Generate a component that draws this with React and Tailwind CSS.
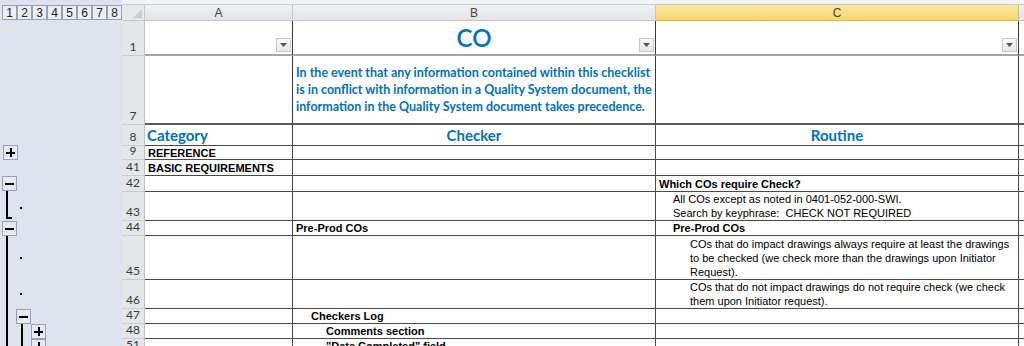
import React from 'react';

const ARIAL = "font-['Liberation_Sans',Arial,sans-serif]";
const CAL = "font-['Lato','Noto_Sans',sans-serif]";

// filter dropdown button for header cells in row 1
const Filter = () => (
    <div className="absolute right-[1px] bottom-[2px] w-[15px] h-[14px] border border-[#c5c7cb] bg-gradient-to-b from-[#fbfbfb] to-[#e6e7ea] flex items-center justify-center">
        <svg width="7" height="4" viewBox="0 0 7 4"><path d="M0 0h7L3.5 4z" fill="#555" /></svg>
    </div>
);

// outline group button (+ / -)
const Toggle = ({ plus, className = '' }) => (
    <div className={`absolute z-20 w-[15px] h-[15px] border border-[#9aa0b4] bg-[#e8eaf2] flex items-center justify-center ${className}`}>
        <div className="relative w-[9px] h-[9px]">
            <div className="absolute left-0 right-0 top-[4px] h-[2px] bg-black" />
            {plus && <div className="absolute top-0 bottom-0 left-[4px] w-[2px] bg-black" />}
        </div>
    </div>
);

// outline bracket line / dot
const Bar = ({ className }) => <div className={`absolute z-10 bg-black ${className}`} />;

const Row = ({ h, num, outline, a, b, c, line = 'border-b border-[#4a4a4a]' }) => (
    <div className="flex" style={{ height: h }}>
        <div className="relative w-[122px] shrink-0 bg-[#dfe3ee]">{outline}</div>
        <div className={`w-[23px] shrink-0 bg-[#e4e6ea] border-r border-[#bfc2c7] border-b border-b-[#c8cbd0] flex justify-center items-end text-[12px] leading-[14px] text-[#3a3a3a] pb-[1px] ${CAL}`}>
            {num}
        </div>
        <div className={`relative w-[148px] shrink-0 border-r border-[#3a3a3a] ${line}`}>{a}</div>
        <div className={`relative w-[363px] shrink-0 border-r border-[#3a3a3a] ${line}`}>{b}</div>
        <div className={`relative w-[363px] shrink-0 border-r border-[#3a3a3a] ${line}`}>{c}</div>
        <div className={`relative flex-1 ${line}`} />
    </div>
);

const T = ({ children, pl = 'pl-[3px]', bold, className = '' }) => (
    <div className={`${ARIAL} text-[11px] leading-[14px] text-black whitespace-nowrap ${pl} ${bold ? 'font-bold' : 'text-[#222]'} ${className}`}>
        {children}
    </div>
);

export default function App() {
    return (
        <div className="w-[1024px] h-[346px] overflow-hidden bg-white select-none">
            {/* strip above column headers */}
            <div className="flex h-[5px]">
                <div className="w-[122px] bg-[#dfe3ee]" />
                <div className="flex-1 bg-[#f3f4f6] border-b border-[#c9cbd0]" />
            </div>

            {/* column header row */}
            <div className="flex h-[16px]">
                <div className="w-[122px] shrink-0 bg-[#dfe3ee] flex items-start pl-[2px]">
                    {['1', '2', '3', '4', '5', '6', '7', '8'].map((l) => (
                        <div key={l} className={`w-[15px] h-[15px] border border-[#9aa0b4] bg-[#eceef4] flex items-center justify-center text-[12px] leading-none text-[#222] ${ARIAL}`}>
                            {l}
                        </div>
                    ))}
                </div>
                <div className="w-[23px] shrink-0 bg-[#e6e8eb] border-r border-b border-[#c3c6cb] relative">
                    <svg className="absolute right-[2px] bottom-[2px]" width="9" height="9" viewBox="0 0 9 9"><path d="M9 0v9H0z" fill="#c9ccd1" /></svg>
                </div>
                {[['A', 148, false], ['B', 363, false], ['C', 363, true]].map(([l, w, sel]) => (
                    <div
                        key={l}
                        style={{ width: w }}
                        className={`shrink-0 flex items-center justify-center text-[12px] text-[#444] ${ARIAL} border-r border-b ${sel ? 'bg-gradient-to-b from-[#fbe8a0] to-[#f8d66a] border-[#e2b84a]' : 'bg-gradient-to-b from-[#f1f2f4] to-[#e2e4e7] border-[#c3c6cb]'}`}
                    >
                        {l}
                    </div>
                ))}
                <div className="flex-1 bg-gradient-to-b from-[#f1f2f4] to-[#e2e4e7] border-b border-[#c3c6cb]" />
            </div>

            {/* row 1 */}
            <Row
                h={35}
                num="1"
                line="border-b-2 border-b-[#a4a6aa]"
                a={<Filter />}
                b={
                    <>
                        <div className={`h-full flex items-center justify-center text-[24px] text-[#0070c0] font-semibold ${CAL}`}>CO</div>
                        <Filter />
                    </>
                }
                c={<Filter />}
            />

            {/* row 7 */}
            <Row
                h={69}
                num="7"
                line="border-b-2 border-b-[#5a5a5a]"
                b={
                    <div className={`h-full flex flex-col justify-center pl-[3px] text-[12.5px] leading-[17px] font-bold text-[#0070c0] whitespace-nowrap ${CAL}`}>
                        <div>In the event that any information contained within this checklist</div>
                        <div>is in conflict with information in a Quality System document, the</div>
                        <div>information in the Quality System document takes precedence.</div>
                    </div>
                }
            />

            {/* row 8 */}
            <Row
                h={21}
                num="8"
                a={<div className={`h-full flex items-end pl-[2px] text-[15px] leading-[19px] font-bold text-[#0070c0] ${CAL}`}>Category</div>}
                b={<div className={`h-full flex items-end justify-center text-[15px] leading-[19px] font-bold text-[#0070c0] ${CAL}`}>Checker</div>}
                c={<div className={`h-full flex items-end justify-center text-[15px] leading-[19px] font-bold text-[#0070c0] ${CAL}`}>Routine</div>}
            />

            {/* row 9 */}
            <Row
                h={14}
                num="9"
                outline={<Toggle plus className="left-[3px] top-[-1px]" />}
                a={<T bold>REFERENCE</T>}
            />

            {/* row 41 */}
            <Row h={16} num="41" a={<T bold className="pt-[1px]">BASIC REQUIREMENTS</T>} />

            {/* row 42 */}
            <Row
                h={16}
                num="42"
                outline={
                    <>
                        <Toggle className="left-[2px] top-0" />
                        <Bar className="left-[6px] top-[15px] w-[2px] h-[28px]" />
                    </>
                }
                c={<T bold className="pt-[1px]">Which COs require Check?</T>}
            />

            {/* row 43 */}
            <Row
                h={29}
                num="43"
                outline={
                    <>
                        <Bar className="left-[20px] top-[15px] w-[2px] h-[2px]" />
                        <Bar className="left-[6px] top-[25px] w-[6px] h-[2px]" />
                    </>
                }
                c={
                    <div>
                        <T pl="pl-[17px]">All COs except as noted in 0401-052-000-SWI.</T>
                        <T pl="pl-[17px]">Search by keyphrase:&nbsp;&nbsp;CHECK NOT REQUIRED</T>
                    </div>
                }
            />

            {/* row 44 */}
            <Row
                h={15}
                num="44"
                outline={
                    <>
                        <Toggle className="left-[2px] top-0" />
                        <Bar className="left-[6px] top-[15px] w-[2px] h-[120px]" />
                    </>
                }
                b={<T bold>Pre-Prod COs</T>}
                c={<T bold pl="pl-[17px]">Pre-Prod COs</T>}
            />

            {/* row 45 */}
            <Row
                h={44}
                num="45"
                outline={<Bar className="left-[20px] top-[21px] w-[2px] h-[2px]" />}
                c={
                    <div className="pt-[1px]">
                        <T pl="pl-[34px]">COs that do impact drawings always require at least the drawings</T>
                        <T pl="pl-[34px]">to be checked (we check more than the drawings upon Initiator</T>
                        <T pl="pl-[34px]">Request).</T>
                    </div>
                }
            />

            {/* row 46 */}
            <Row
                h={29}
                num="46"
                outline={<Bar className="left-[20px] top-[13px] w-[2px] h-[2px]" />}
                c={
                    <div>
                        <T pl="pl-[34px]">COs that do not impact drawings do not require check (we check</T>
                        <T pl="pl-[34px]">them upon Initiator request).</T>
                    </div>
                }
            />

            {/* row 47 */}
            <Row
                h={15}
                num="47"
                outline={
                    <>
                        <Toggle className="left-[16px] top-0" />
                        <Bar className="left-[21px] top-[15px] w-[2px] h-[40px]" />
                    </>
                }
                b={<T bold pl="pl-[18px]">Checkers Log</T>}
            />

            {/* row 48 */}
            <Row
                h={15}
                num="48"
                outline={<Toggle plus className="left-[31px] top-0" />}
                b={<T bold pl="pl-[33px]">Comments section</T>}
            />

            {/* row 51 */}
            <Row
                h={15}
                num="51"
                outline={<Toggle plus className="left-[31px] top-0" />}
                b={<T bold pl="pl-[33px]">"Date Completed" field</T>}
            />
        </div>
    );
}
